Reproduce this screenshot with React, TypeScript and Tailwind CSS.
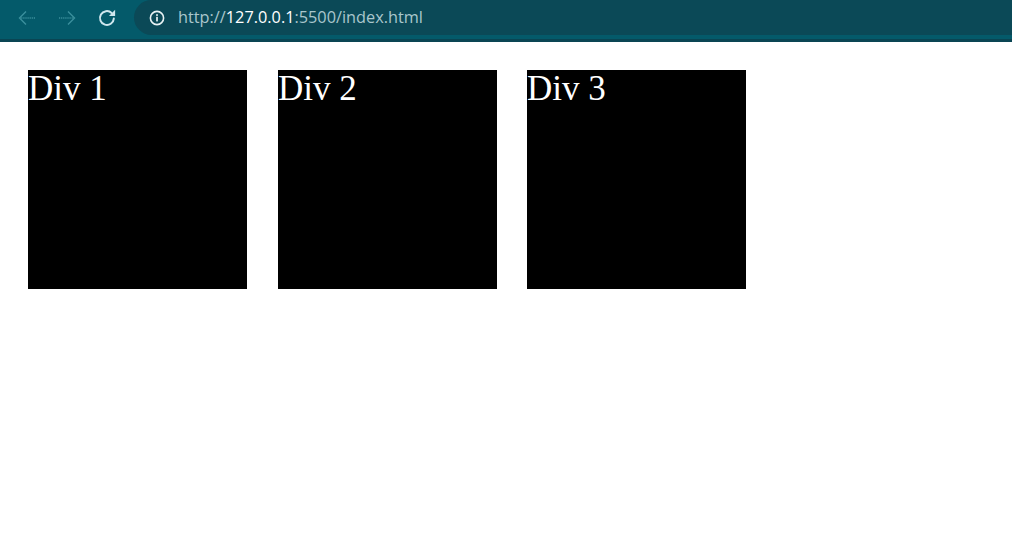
import React from "react";

function Arrow({ dir }: { dir: "left" | "right" }) {
  return (
    <svg width="20" height="20" viewBox="0 0 20 20" fill="none" stroke="#3b8f9c" strokeWidth="1.4" strokeDasharray="1.2 0.9" strokeLinecap="butt">
      {dir === "left" ? (
        <>
          <path d="M18 10H3" />
          <path d="M9 3.5L2.5 10l6.5 6.5" strokeDasharray="none" />
        </>
      ) : (
        <>
          <path d="M2 10h15" />
          <path d="M11 3.5l6.5 6.5-6.5 6.5" strokeDasharray="none" />
        </>
      )}
    </svg>
  );
}

function Reload() {
  return (
    <svg width="22" height="22" viewBox="0 0 20 20" fill="none">
      <path d="M16.2 10.5a6.3 6.3 0 1 1-2-5.1" stroke="#cfe7ee" strokeWidth="1.8" strokeLinecap="round" />
      <path d="M17.4 2.6v5.6h-5.6z" fill="#cfe7ee" />
    </svg>
  );
}

function Info() {
  return (
    <svg width="16" height="16" viewBox="0 0 16 16" fill="none">
      <circle cx="8" cy="8" r="6.6" stroke="#e8f2f4" strokeWidth="1.6" />
      <rect x="7.15" y="6.8" width="1.7" height="4.6" fill="#e8f2f4" />
      <rect x="7.15" y="4.2" width="1.7" height="1.7" fill="#e8f2f4" />
    </svg>
  );
}

export default function App() {
  return (
    <div className="w-[1012px] h-[553px] bg-white overflow-hidden">
      <div className="h-[42px] bg-[#045a6a] border-b-[3px] border-[#0a4553] flex items-start">
        <div className="flex items-center h-[35px] w-[134px] pl-[17px]">
          <Arrow dir="left" />
          <div className="w-[20px]" />
          <Arrow dir="right" />
          <div className="w-[19px]" />
          <Reload />
        </div>
        <div className="flex-1 h-[35px] bg-[#0b4957] rounded-l-full flex items-center pl-[15px]">
          <Info />
          <div
            className="ml-[13px] text-[16.3px] text-[#a9c6cc]"
            style={{ fontFamily: '"Open Sans", "Noto Sans", sans-serif' }}
          >
            http://<span className="text-white">127.0.0.1</span>:5500/index.html
          </div>
        </div>
      </div>
      <div className="flex pt-[28px] pl-[28px]">
        {["Div 1", "Div 2", "Div 3"].map((t, i) => (
          <div
            key={t}
            className={`w-[219px] h-[219px] bg-black text-white text-[35px] leading-[1.107] ${i === 1 ? "ml-[31px]" : i === 2 ? "ml-[30px]" : ""}`}
            style={{ fontFamily: '"Liberation Serif", serif' }}
          >
            {t}
          </div>
        ))}
      </div>
    </div>
  );
}
